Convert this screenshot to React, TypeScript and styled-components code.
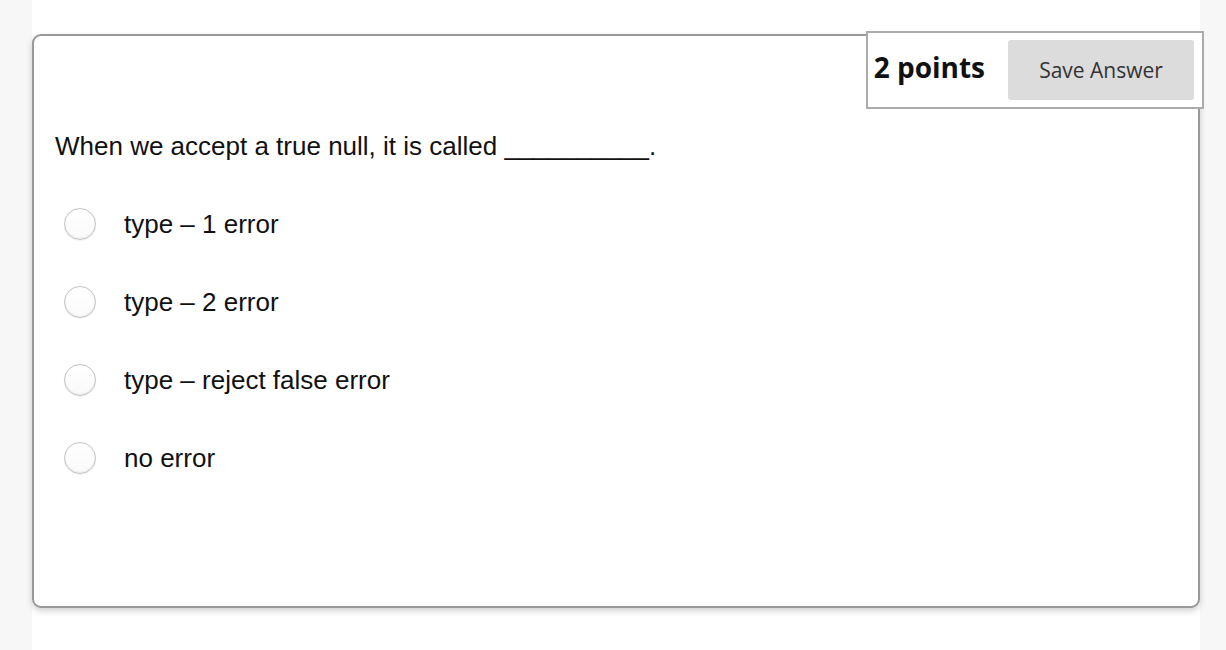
import styled, { createGlobalStyle } from 'styled-components';

const GlobalStyle = createGlobalStyle`
  html, body {
    margin: 0;
    padding: 0;
    background: #f7f7f7;
  }
`;

const Page = styled.div`
  width: 1168px;
  min-height: 650px;
  margin-left: 32px;
  padding-top: 34px;
  box-sizing: border-box;
  background: #ffffff;
`;

const Card = styled.div`
  position: relative;
  height: 574px;
  box-sizing: border-box;
  border: 2px solid #999999;
  border-radius: 9px;
  box-shadow: 0 3px 6px rgba(0, 0, 0, 0.18);
  background: #ffffff;
  padding: 95px 20px 0 21px;
  font-family: 'Liberation Sans', Arial, sans-serif;
  color: #111111;
`;

const PointsBox = styled.div`
  position: absolute;
  top: -5px;
  right: -6px;
  display: flex;
  align-items: center;
  gap: 23px;
  padding: 7px 8px 7px 6px;
  border: 2px solid #ababab;
  background: #ffffff;
`;

const Points = styled.strong`
  padding-bottom: 7px;
  font-family: 'Open Sans', sans-serif;
  font-size: 28px;
  font-weight: 700;
  color: #111111;
`;

const SaveButton = styled.button`
  width: 186px;
  height: 60px;
  border: none;
  border-radius: 3px;
  background: #dcdcdc;
  font-family: 'Open Sans', sans-serif;
  font-size: 21px;
  color: #333333;
  cursor: pointer;
`;

const Question = styled.p`
  margin: 0;
  font-size: 26px;
  line-height: 30px;
`;

const Options = styled.ul`
  list-style: none;
  margin: 47px 0 0;
  padding: 0 0 0 9px;
  display: flex;
  flex-direction: column;
  gap: 46px;
`;

const Option = styled.li`
  display: flex;
  align-items: center;
  gap: 28px;
  font-size: 26px;
  line-height: 32px;
`;

const Radio = styled.span`
  width: 30px;
  height: 30px;
  flex: none;
  border-radius: 50%;
  border: 1px solid #c4c4c4;
  background: linear-gradient(#ffffff, #fafafa);
  box-shadow: inset 0 -1px 2px rgba(0, 0, 0, 0.07), 0 0.5px 1px rgba(0, 0, 0, 0.1);
`;

const answers = ['type – 1 error', 'type – 2 error', 'type – reject false error', 'no error'];

export default function App() {
  return (
    <>
      <GlobalStyle />
      <Page>
        <Card>
          <PointsBox>
            <Points>2 points</Points>
            <SaveButton>Save Answer</SaveButton>
          </PointsBox>
          <Question>When we accept a true null, it is called __________.</Question>
          <Options>
            {answers.map((a) => (
              <Option key={a}>
                <Radio />
                {a}
              </Option>
            ))}
          </Options>
        </Card>
      </Page>
    </>
  );
}
